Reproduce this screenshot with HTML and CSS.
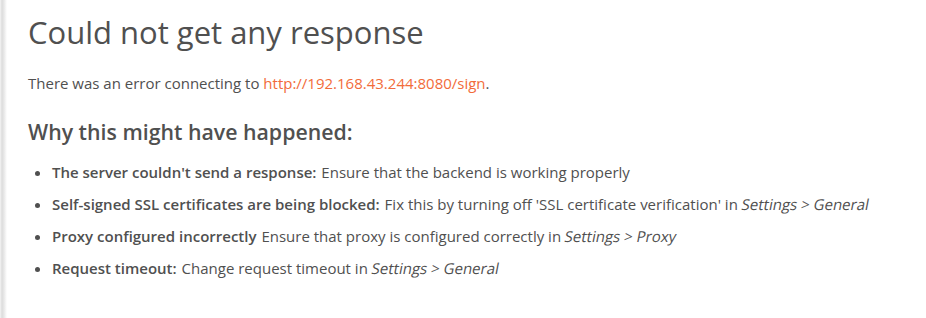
FILE: index.html
```html
<!DOCTYPE html>
<html>
<head>
<meta charset="utf-8">
<link rel="stylesheet" href="styles.css">
</head>
<body>
<div class="page">
  <div class="content">
    <h1 class="title">Could not get any response</h1>
    <p class="lead">There was an error connecting to <a class="link">http://192.168.43.244:8080/sign</a>.</p>
    <h2 class="subtitle">Why this might have happened:</h2>
    <ul class="reasons">
      <li><b>The server couldn't send a response:</b> Ensure that the backend is working properly</li>
      <li><b>Self-signed SSL certificates are being blocked:</b> Fix this by turning off 'SSL certificate verification' in <i class="path">Settings &gt; General</i></li>
      <li><b>Proxy configured incorrectly</b> Ensure that proxy is configured correctly in <i class="path">Settings &gt; Proxy</i></li>
      <li><b>Request timeout:</b> Change request timeout in <i class="path">Settings &gt; General</i></li>
    </ul>
  </div>
</div>
</body>
</html>
```
FILE: styles.css
```css
html, body {
  margin: 0;
  padding: 0;
  background: #ffffff;
}
.page {
  width: 926px;
  height: 318px;
  background: linear-gradient(to right, #f4f4f4 0px, #dcdcdc 2px, #e8e8e8 4px, #ffffff 7px);
  font-family: "Open Sans", "Noto Sans", sans-serif;
  color: #505050;
  overflow: hidden;
}
.content {
  padding: 8px 0 0 28px;
}
.title {
  margin: 0;
  font-size: 31px;
  font-weight: 400;
  line-height: 48px;
  color: #505050;
}
.lead {
  margin: 17px 0 0;
  font-size: 15px;
  line-height: 20px;
}
.link {
  color: #f26b3a;
  text-decoration: none;
}
.subtitle {
  margin: 25px 0 0;
  font-size: 21.3px;
  font-weight: 600;
  line-height: 28px;
  color: #505050;
}
.reasons {
  margin: 16px 0 0;
  padding: 0 0 0 24px;
  font-size: 15px;
  line-height: 20px;
}
.reasons li {
  margin-bottom: 12px;
}
.reasons b {
  font-weight: 600;
  margin-right: 1px;
}
.path {
  display: inline-block;
  font-style: normal;
  transform: skewX(-11deg);
}
```
